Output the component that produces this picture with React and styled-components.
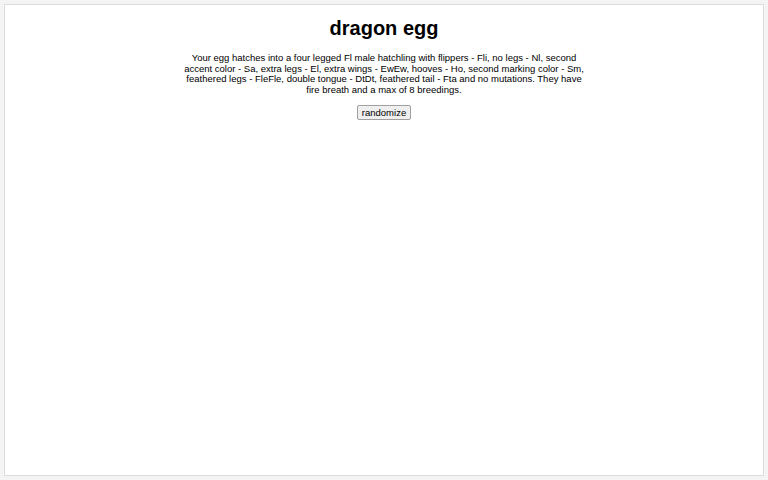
import React from "react";
import styled, { createGlobalStyle } from "styled-components";

const Global = createGlobalStyle`
  html, body { margin: 0; padding: 0; background: #f4f4f4; }
  body { font-family: "Liberation Sans", Arial, sans-serif; }
`;

const Panel = styled.div`
  box-sizing: border-box;
  margin: 4px 4px 0 4px;
  height: 472px;
  background: #fff;
  border: 1px solid #dcdcdc;
  display: flex;
  flex-direction: column;
  align-items: center;
  padding-top: 12px;
`;

const Title = styled.h1`
  margin: 0;
  font-size: 20px;
  font-weight: bold;
  color: #000;
  line-height: 23px;
`;

const Description = styled.p`
  margin: 13px 0 0 0;
  width: 404px;
  font-size: 9.5px;
  line-height: 10.6px;
  text-align: center;
  color: #000;
`;

const Button = styled.button`
  margin-top: 10px;
  font-family: "Liberation Sans", Arial, sans-serif;
  font-size: 9.5px;
  padding: 1px 4px;
  background: #efefef;
  border: 1px solid #a0a0a0;
  border-radius: 2px;
  color: #000;
`;

export default function App() {
  return (
    <>
      <Global />
      <Panel>
        <Title>dragon egg</Title>
        <Description>
          Your egg hatches into a four legged Fl male hatchling with flippers - Fli, no legs - Nl, second
          accent color - Sa, extra legs - El, extra wings - EwEw, hooves - Ho, second marking color - Sm,
          feathered legs - FleFle, double tongue - DtDt, feathered tail - Fta and no mutations. They have
          fire breath and a max of 8 breedings.
        </Description>
        <Button>randomize</Button>
      </Panel>
    </>
  );
}
